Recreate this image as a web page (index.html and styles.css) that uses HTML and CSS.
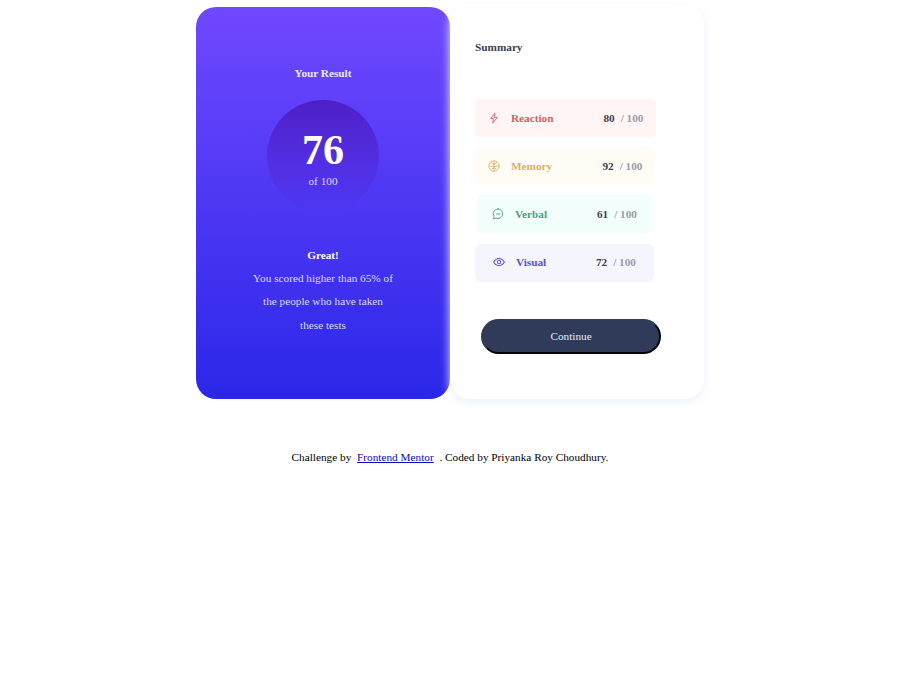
FILE: index.html
```html
<!doctype html>
<html lang="en">
    <head>
        <meta charset="utf-8">
        <title>Results Summary</title>
        <meta name="viewport" content="width=device-width, initial-scale=1">
        <link rel="stylesheet" href="styles.css">
    </head>
    <body>
        <main class="wrapper">
            <section class="result">
                <h1 class="result-title">Your Result</h1>
                <div class="circle">
                    <span class="score">76</span>
                    <span class="out-of">of 100</span>
                </div>
                <h2 class="grade">Great!</h2>
                <p class="blurb">You scored higher than 65% of<br>the people who have taken<br>these tests</p>
            </section>

            <section class="summary">
                <h2 class="summary-title">Summary</h2>

                <div class="row reaction">
                    <svg class="icon" viewBox="0 0 20 20" fill="none" stroke="currentColor" stroke-width="1.5" stroke-linejoin="round">
                        <path d="M11.5 1.5 L4.5 11 H9 L8 18.5 L15.5 9 H10.5 Z"/>
                    </svg>
                    <span class="label">Reaction</span>
                    <span class="points">80</span>
                    <span class="total">/ 100</span>
                </div>

                <div class="row memory">
                    <svg class="icon" viewBox="0 0 20 20" fill="none" stroke="currentColor" stroke-width="1.4" stroke-linecap="round">
                        <circle cx="10" cy="10" r="8.6"/>
                        <path d="M10 2 V18 M10 7 C8 7 6.5 6 6 4.5 M10 7 C12 7 13.5 6 14 4.5 M10 11 C8 11 6 10.5 3 10 M10 11 C12 11 14 10.5 17 10 M7 14.5 L10 13 L13 14.5"/>
                    </svg>
                    <span class="label">Memory</span>
                    <span class="points">92</span>
                    <span class="total">/ 100</span>
                </div>

                <div class="row verbal">
                    <svg class="icon" viewBox="0 0 20 20" fill="none" stroke="currentColor" stroke-width="1.5" stroke-linecap="round" stroke-linejoin="round">
                        <path d="M10.5 1.5 A8 8 0 1 1 6.6 16.8 L2 18 L3.4 14 A8 8 0 0 1 10.5 1.5 Z"/>
                        <path d="M7.5 10 H13.5"/>
                    </svg>
                    <span class="label">Verbal</span>
                    <span class="points">61</span>
                    <span class="total">/ 100</span>
                </div>

                <div class="row visual">
                    <svg class="icon" viewBox="0 0 20 20" fill="none" stroke="currentColor" stroke-width="1.7" stroke-linejoin="round">
                        <path d="M1 10 C4 5 7 4 10 4 C13 4 16 5 19 10 C16 15 13 16 10 16 C7 16 4 15 1 10 Z"/>
                        <circle cx="10" cy="10" r="2.8"/>
                    </svg>
                    <span class="label">Visual</span>
                    <span class="points">72</span>
                    <span class="total">/ 100</span>
                </div>

                <button class="continue">Continue</button>
            </section>
        </main>

        <footer class="credits">
            Challenge by <a href="#">Frontend Mentor</a> . Coded by Priyanka Roy Choudhury.
        </footer>
    </body>
</html>
```

FILE: styles.css
```css
body {
    margin: 0;
    font-family: "Liberation Serif", "Times New Roman", serif;
    font-size: 11.25px;
    background-color: #fff;
}

.wrapper {
    display: flex;
    justify-content: center;
    align-items: flex-end;
    padding-top: 4px;
}

.result {
    box-sizing: border-box;
    width: 254px;
    height: 392px;
    padding-top: 59px;
    border-radius: 20px;
    background: linear-gradient(#7048ff, #2b27e8);
    color: #fff;
    text-align: center;
}

.result-title {
    margin: 0;
    font-size: 11.25px;
    line-height: 14px;
    color: #ecebff;
}

.circle {
    width: 112px;
    height: 112px;
    margin: 20px auto 0;
    border-radius: 50%;
    background: linear-gradient(#4d1fc8, rgba(37, 33, 201, 0));
    display: flex;
    flex-direction: column;
    align-items: center;
}

.score {
    margin-top: 26px;
    font-size: 42px;
    font-weight: bold;
    line-height: 48px;
}

.out-of {
    line-height: 14px;
    color: #dedcff;
}

.grade {
    margin: 36px 0 0;
    font-size: 11.25px;
    line-height: 14px;
}

.blurb {
    margin: 0;
    padding-top: 5px;
    line-height: 23.25px;
    color: #dcdbff;
}

.summary {
    box-sizing: border-box;
    width: 254px;
    height: 395px;
    padding: 36px 25px 0;
    border-radius: 20px;
    background-color: #fff;
    box-shadow: 0 3px 10px #ecf0ff;
    position: relative;
}

.summary-title {
    margin: 0 0 45px;
    font-size: 11.25px;
    line-height: 14px;
    color: #3b3f52;
}

.row {
    box-sizing: border-box;
    width: 179px;
    height: 38px;
    margin-bottom: 10px;
    border-radius: 6px;
    display: flex;
    align-items: center;
    padding-left: 13px;
    font-weight: bold;
}

.icon {
    width: 12px;
    height: 12px;
    flex: none;
}

.label {
    margin-left: 11px;
    flex: 1;
}

.points {
    color: #3b3f52;
}

.total {
    margin-left: 6px;
    margin-right: 12px;
    color: #9b9ba6;
}

.reaction {
    width: 181px;
    background-color: #fff5f5;
    color: #cf6169;
}

.reaction .total {
    margin-right: 12.5px;
}

.memory {
    background-color: #fffcf5;
    color: #d9b25f;
}

.memory .total {
    margin-right: 11.5px;
}

.verbal {
    width: 176px;
    margin-bottom: 10.75px;
    margin-left: 2px;
    padding-left: 15px;
    background-color: #f3fffc;
    color: #4d9e85;
}

.verbal .total {
    margin-right: 16px;
}

.visual {
    padding-left: 18px;
    padding-bottom: 1px;
    background-color: #f5f5fe;
    color: #5a50d8;
}

.visual .total {
    margin-right: 18px;
}

.continue {
    display: block;
    box-sizing: border-box;
    width: 180px;
    height: 35px;
    margin: 37.25px 0 0 6px;
    padding: 0 0 2px;
    border: 2px outset #303b5a;
    border-radius: 18px;
    background-color: #303b5a;
    color: #e6e8f2;
    font-family: inherit;
    font-size: 11.25px;
}

.credits {
    margin-top: 51px;
    text-align: center;
    line-height: 14px;
}

.credits a {
    margin: 0 3px;
    color: #0a0ab8;
}
```
